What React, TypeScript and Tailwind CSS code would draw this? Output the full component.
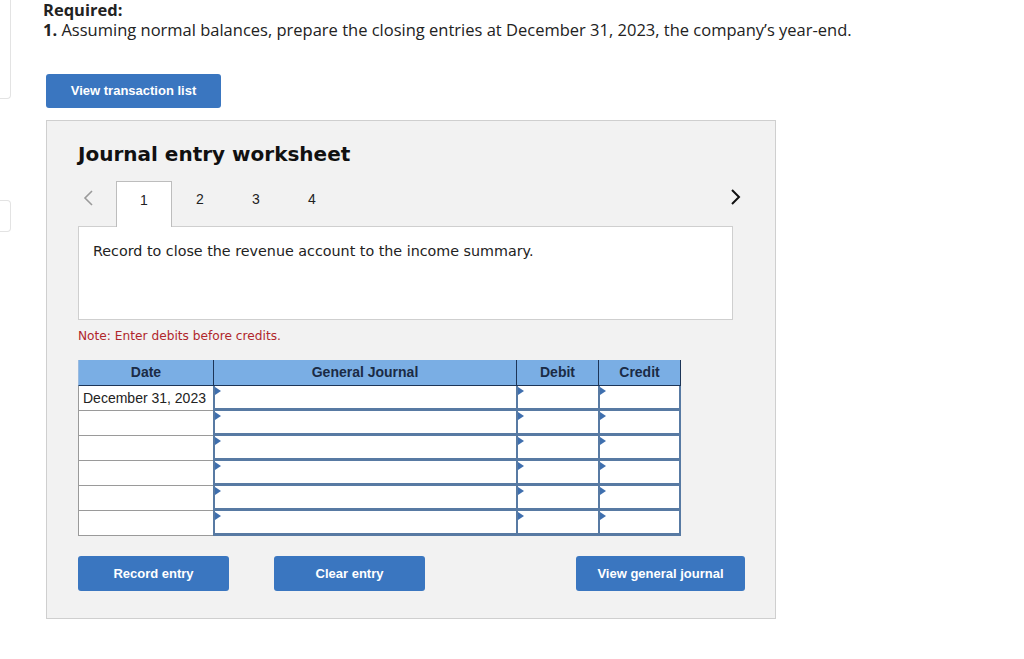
import React from 'react';

const TABS = ['1', '2', '3', '4'];
const ROWS = ['December 31, 2023', '', '', '', '', ''];

const Chevron = ({ dir, className }: { dir: 'left' | 'right'; className?: string }) => (
  <svg width="12" height="18" viewBox="0 0 12 18" className={className}>
    <polyline
      points={dir === 'left' ? '10,2 3,9 10,16' : '2,2 9,9 2,16'}
      fill="none"
      stroke="currentColor"
      strokeWidth={dir === 'left' ? 1.6 : 2}
    />
  </svg>
);

// small blue marker that sits in the top-left corner of each input cell
const Marker = () => (
  <span className="absolute left-0 top-[1px] h-0 w-0 border-y-[4px] border-l-[6px] border-y-transparent border-l-[#3f6fae]" />
);

const InputCell = ({ last }: { last?: boolean }) => (
  <div
    className={`relative h-[25px] bg-white border-l-2 border-b-[3px] border-[#587aa3] ${last ? 'border-r-2' : ''}`}
  >
    <Marker />
  </div>
);

const BlueButton = ({ label, className }: { label: string; className: string }) => (
  <button
    className={`rounded-[3px] bg-[#3a76c0] text-[13px] font-bold text-white ${className}`}
    style={{ fontFamily: '"Liberation Sans", Arial, sans-serif' }}
  >
    {label}
  </button>
);

export default function App() {
  return (
    <div className="flex min-h-[659px] bg-white">
      {/* faint cut-off panels at the left edge */}
      <div className="flex w-[11px] flex-col">
        <div className="h-[99px] rounded-br-[4px] border-r border-b border-[#e3e3e3]" />
        <div className="mt-[101px] h-[32px] rounded-r-[4px] border border-l-0 border-[#e3e3e3]" />
      </div>

      <div className="flex flex-col pl-[32px]">
        {/* Question */}
        <div className="text-[16.5px] leading-[20px] text-[#222]" style={{ fontFamily: '"Open Sans", Lato, sans-serif' }}>
          <div className="font-bold">Required:</div>
          <div>
            <span className="font-bold">1.</span> Assuming normal balances, prepare the closing entries at December 31,
            2023, the company’s year-end.
          </div>
        </div>

        <BlueButton label="View transaction list" className="ml-[3px] mt-[34px] h-[34px] w-[175px]" />

        {/* Worksheet panel */}
        <div
          className="ml-[3px] mt-[12px] flex w-[730px] flex-col border border-[#cfcfcf] bg-[#f2f2f2] pb-[27px] pl-[31px] pr-[30px] pt-[19px]"
          style={{ fontFamily: '"DejaVu Sans", Verdana, sans-serif' }}
        >
          <h2 className="text-[20px] font-bold leading-[28px] text-[#111]">Journal entry worksheet</h2>

          {/* Tabs */}
          <div className="mt-[13px] flex h-[46px] items-start" style={{ fontFamily: '"Liberation Sans", Arial, sans-serif' }}>
            <div className="flex w-[38px] items-center pl-[4px] pt-[8px] text-[#9a9a9a]">
              <Chevron dir="left" />
            </div>
            {TABS.map((t, i) => (
              <div
                key={t}
                className={`z-10 flex h-[46px] w-[56px] justify-center pt-[8px] text-[14px] text-[#222] ${
                  i === 0 ? 'border border-b-0 border-[#bdbdbd] bg-white' : ''
                }`}
              >
                {t}
              </div>
            ))}
            <div className="ml-auto flex items-center pr-[3px] pt-[7px] text-[#111]">
              <Chevron dir="right" />
            </div>
          </div>

          {/* Instruction box */}
          <div className="-mt-[1px] h-[94px] w-[655px] border border-[#cfcfcf] bg-white pl-[14px] pt-[14px] text-[14.3px] text-[#222]">
            Record to close the revenue account to the income summary.
          </div>

          <div className="mt-[8px] text-[12.2px] leading-[16px] text-[#b0262b]">Note: Enter debits before credits.</div>

          {/* Journal table */}
          <div
            className="mt-[16px] w-[603px] text-[14px]"
            style={{ fontFamily: '"Liberation Sans", Arial, sans-serif' }}
          >
            <div className="grid h-[26px] grid-cols-[135px_303px_82px_82px] border-b border-l border-[#1d3557] border-l-[#9bbbe0] bg-[#7aaee4] font-bold text-[#1b2b45]">
              <div className="flex items-center justify-center border-r border-[#1d3557]">Date</div>
              <div className="flex items-center justify-center border-r border-[#1d3557]">General Journal</div>
              <div className="flex items-center justify-center border-r border-[#1d3557]">Debit</div>
              <div className="flex items-center justify-center border-r border-[#1d3557]">Credit</div>
            </div>
            {ROWS.map((d, i) => (
              <div key={i} className="grid grid-cols-[135px_303px_82px_83px]">
                <div className="flex h-[25px] items-center border-b border-l border-[#9a9a9a] bg-white pl-[4px] text-[#222]">
                  {d}
                </div>
                <InputCell />
                <InputCell />
                <InputCell last />
              </div>
            ))}
          </div>

          {/* Actions */}
          <div className="mt-[20px] flex h-[35px]">
            <BlueButton label="Record entry" className="h-[35px] w-[151px]" />
            <BlueButton label="Clear entry" className="ml-[45px] h-[35px] w-[151px]" />
            <BlueButton label="View general journal" className="ml-auto h-[35px] w-[169px]" />
          </div>
        </div>
      </div>
    </div>
  );
}
